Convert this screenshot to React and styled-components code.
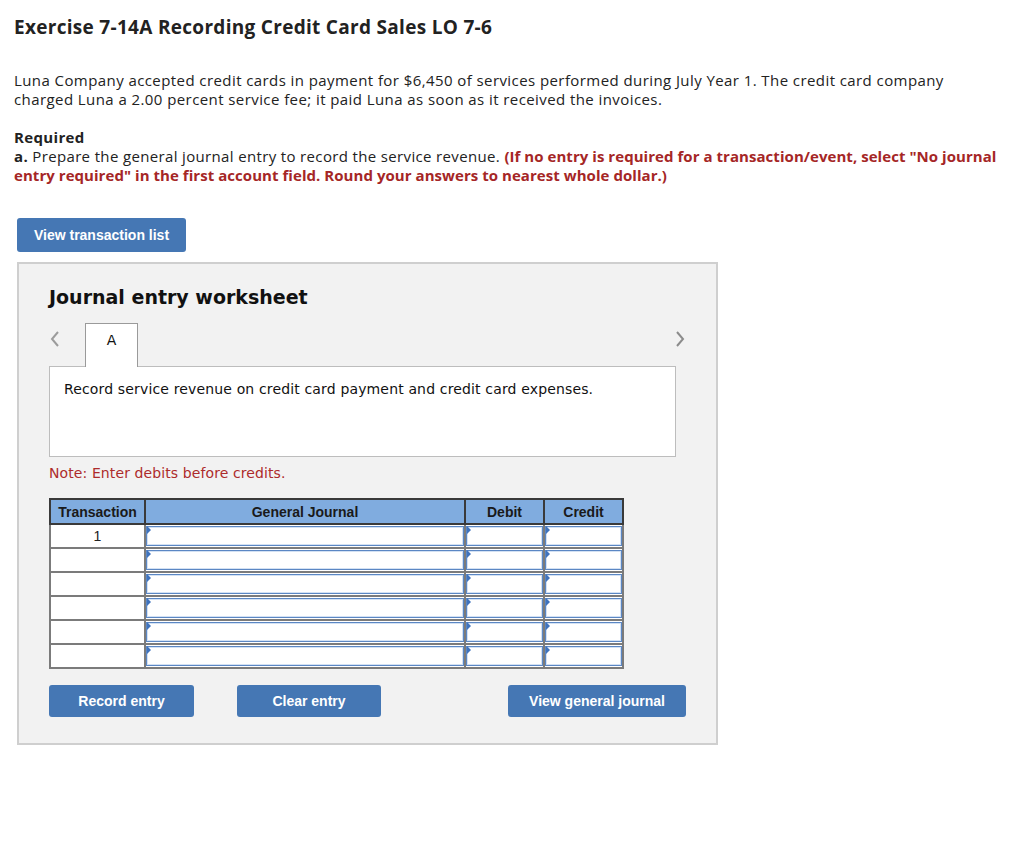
import React from "react";
import styled, { createGlobalStyle } from "styled-components";

const Global = createGlobalStyle`
  html, body { margin: 0; padding: 0; background: #fff; }
  body { font-family: "Open Sans", Lato, sans-serif; color: #222; }
  * { box-sizing: border-box; }
`;

const Page = styled.div`
  padding: 15px 14px 40px 14px;
  width: 1024px;
`;

const Title = styled.h1`
  margin: 0;
  font-family: "Open Sans", sans-serif;
  font-weight: 700;
  font-size: 19px;
  line-height: 24px;
  color: #222;
  letter-spacing: 0.3px;
`;

const Para = styled.p`
  margin: 32px 0 0 0;
  font-size: 15px;
  line-height: 19px;
  letter-spacing: 0.42px;
  color: #222;
`;

const Required = styled.div`
  margin-top: 19px;
  font-size: 15px;
  line-height: 19px;
  letter-spacing: 0.35px;
`;

const Strong = styled.span`
  font-weight: 700;
`;

const Red = styled.span`
  font-weight: 700;
  color: #a52626;
  letter-spacing: 0.05px;
`;

const Button = styled.button`
  display: inline-flex;
  align-items: center;
  justify-content: center;
  height: ${(p) => p.$h || 32}px;
  width: ${(p) => p.$w}px;
  background: #4577b4;
  color: #fff;
  border: none;
  border-radius: 3px;
  font-family: "Liberation Sans", Arial, sans-serif;
  font-weight: 700;
  font-size: 14px;
  padding: 0;
  cursor: pointer;
`;

const TopButtonWrap = styled.div`
  margin: 33px 0 0 3px;
`;

const Panel = styled.div`
  margin: 10px 0 0 3px;
  width: 701px;
  background: #f2f2f2;
  border: 2px solid #cfcfcf;
  padding: 21px 30px 26px 30px;
`;

const PanelTitle = styled.h2`
  margin: 0;
  font-family: "DejaVu Sans", Verdana, sans-serif;
  font-weight: 700;
  font-size: 19px;
  line-height: 24px;
  color: #111;
`;

const TabRow = styled.div`
  display: flex;
  align-items: flex-start;
  margin-top: 14px;
  height: 43px;
`;

const Chevron = styled.svg`
  width: 12px;
  height: 18px;
  margin-top: 7px;
  flex: none;
`;

const Tab = styled.div`
  width: 53px;
  height: 44px;
  margin-left: ${(p) => p.$ml}px;
  background: #fff;
  border: 1px solid #9a9a9a;
  border-bottom: none;
  text-align: center;
  padding-top: 8px;
  font-family: "DejaVu Sans", Verdana, sans-serif;
  font-size: 14px;
  color: #111;
  position: relative;
  z-index: 1;
`;

const Spacer = styled.div`
  flex: 1;
`;

const DescBox = styled.div`
  width: 627px;
  height: 91px;
  background: #fff;
  border: 1px solid #bdbdbd;
  padding: 13px 14px;
  font-family: "DejaVu Sans", Verdana, sans-serif;
  font-size: 14px;
  letter-spacing: 0.15px;
  line-height: 18px;
  color: #111;
`;

const Note = styled.div`
  margin-top: 7px;
  font-family: "DejaVu Sans", Verdana, sans-serif;
  font-size: 14px;
  letter-spacing: 0.1px;
  line-height: 18px;
  color: #ad2b2b;
`;

const Table = styled.table`
  margin-top: 16px;
  border-collapse: collapse;
  width: 574px;
  table-layout: fixed;
  font-family: "Liberation Sans", Arial, sans-serif;
`;

const Th = styled.th`
  background: #80acdf;
  border: 2px solid #3a3a3a;
  height: 25px;
  font-size: 14px;
  font-weight: 700;
  color: #1a1a1a;
  padding: 0;
  width: ${(p) => p.$w}px;
`;

const Td = styled.td`
  border: 2px solid #7b7b7b;
  height: 24px;
  padding: 0;
  background: #fff;
  text-align: center;
  font-size: 14px;
  color: #222;
  position: relative;
`;

const InputCell = styled.td`
  border: 2px solid #7b7b7b;
  height: 24px;
  padding: 0;
  background: #fff;
  position: relative;
`;

const Field = styled.div`
  height: 20px;
  border: 1px solid #5b87c4;
  box-shadow: inset 0 0 0 1px #d3e1f3;
  background: #fff;
`;

const Marker = styled.span`
  position: absolute;
  left: 1px;
  top: 1px;
  width: 0;
  height: 0;
  border-top: 4px solid transparent;
  border-bottom: 4px solid transparent;
  border-left: 4px solid #3f73bd;
`;

const ButtonRow = styled.div`
  display: flex;
  justify-content: space-between;
  width: 637px;
  margin-top: 16px;
`;

const ButtonGroup = styled.div`
  display: flex;
  gap: 43px;
`;

const LeftChevron = () => (
  <Chevron viewBox="0 0 12 18">
    <polyline points="9,2 3,9 9,16" fill="none" stroke="#9c9c9c" strokeWidth="2" />
  </Chevron>
);

const RightChevron = () => (
  <Chevron viewBox="0 0 12 18">
    <polyline points="3,2 9,9 3,16" fill="none" stroke="#8c8c8c" strokeWidth="2" />
  </Chevron>
);

const InputTd = () => (
  <InputCell>
    <Marker />
    <Field />
  </InputCell>
);

export default function App() {
  const rows = [0, 1, 2, 3, 4, 5];
  return (
    <Page>
      <Global />
      <Title>Exercise 7-14A Recording Credit Card Sales LO 7-6</Title>
      <Para>
        Luna Company accepted credit cards in payment for $6,450 of services performed during July Year 1. The credit card company
        <br />
        charged Luna a 2.00 percent service fee; it paid Luna as soon as it received the invoices.
      </Para>
      <Required>
        <Strong>Required</Strong>
        <br />
        <Strong>a.</Strong> Prepare the general journal entry to record the service revenue.{" "}
        <Red>
          (If no entry is required for a transaction/event, select "No journal
          <br />
          entry required" in the first account field. Round your answers to nearest whole dollar.)
        </Red>
      </Required>
      <TopButtonWrap>
        <Button $w={169} $h={34}>View transaction list</Button>
      </TopButtonWrap>
      <Panel>
        <PanelTitle>Journal entry worksheet</PanelTitle>
        <TabRow>
          <LeftChevron />
          <Tab $ml={24}>A</Tab>
          <Spacer />
          <RightChevron />
        </TabRow>
        <DescBox>Record service revenue on credit card payment and credit card expenses.</DescBox>
        <Note>Note: Enter debits before credits.</Note>
        <Table>
          <thead>
            <tr>
              <Th $w={95}>Transaction</Th>
              <Th $w={320}>General Journal</Th>
              <Th $w={79}>Debit</Th>
              <Th $w={79}>Credit</Th>
            </tr>
          </thead>
          <tbody>
            {rows.map((r) => (
              <tr key={r}>
                <Td>{r === 0 ? "1" : ""}</Td>
                <InputTd />
                <InputTd />
                <InputTd />
              </tr>
            ))}
          </tbody>
        </Table>
        <ButtonRow>
          <ButtonGroup>
            <Button $w={145}>Record entry</Button>
            <Button $w={144}>Clear entry</Button>
          </ButtonGroup>
          <Button $w={178}>View general journal</Button>
        </ButtonRow>
      </Panel>
    </Page>
  );
}
